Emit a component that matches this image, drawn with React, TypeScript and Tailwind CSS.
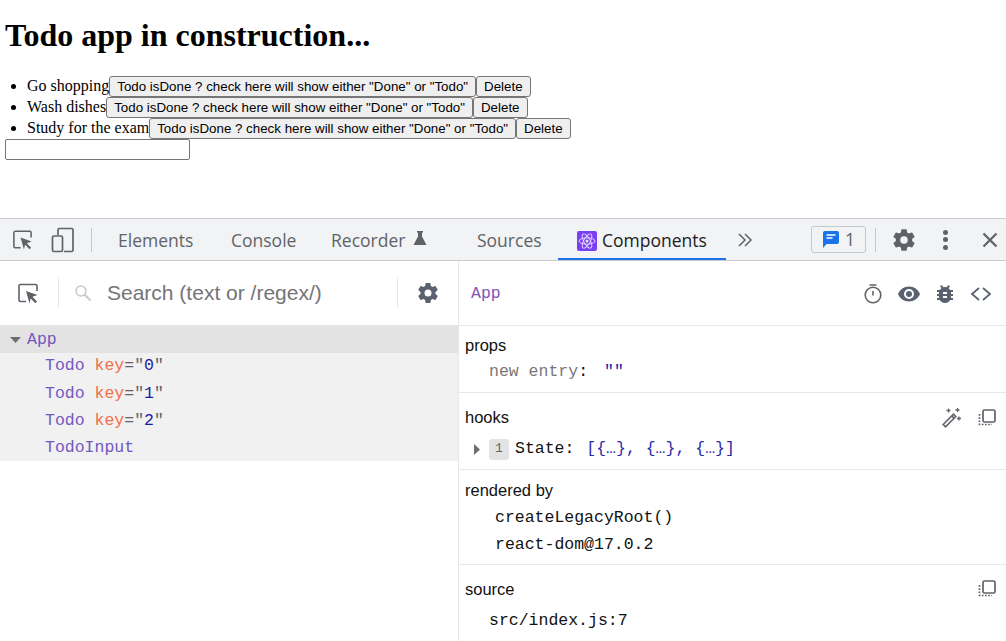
import * as React from "react";

const todos = ["Go shopping", "Wash dishes", "Study for the exam"];
const keys = ["0", "1", "2"];

const mono = "font-['Liberation_Mono',monospace]";
const sans = "font-['Liberation_Sans',sans-serif]";
const tabFont = "font-['Open_Sans',sans-serif]";

function PageButton(props: React.PropsWithChildren) {
  return (
    <button
      type="button"
      className={`${sans} box-border h-[21px] rounded-[3px] border border-[#767676] bg-[#efefef] px-[7px] align-top text-[13.33px] leading-[15px] text-black`}
    >
      {props.children}
    </button>
  );
}

function InspectIcon({ className }: { className?: string }) {
  return (
    <svg viewBox="0 0 24 24" className={className} fill="none">
      <path d="M10 20.5H4.500A1.500 1.500 0 0 1 3 19V5a1.500 1.500 0 0 1 1.500-1.500h15A1.500 1.500 0 0 1 21 5v5" stroke="#5f6368" strokeWidth="1.600" />
      <path d="M10 10l11.500 4-5 1.800 4.500 4.700-1.700 1.700-4.600-4.600-1.200 4.900z" fill="#5f6368" />
    </svg>
  );
}

function Gear({ className }: { className?: string }) {
  return (
    <svg viewBox="0 0 24 24" className={className} fill="currentColor">
      <path d="M19.430 12.980c.04-.32.070-.64.070-.98s-.03-.66-.07-.98l2.110-1.650a.5.500 0 0 0 .12-.64l-2-3.460a.5.500 0 0 0-.61-.22l-2.490 1a7.300 7.300 0 0 0-1.690-.98l-.38-2.650A.49.490 0 0 0 14 2h-4a.49.490 0 0 0-.49.420l-.38 2.650c-.61.25-1.170.59-1.690.98l-2.490-1a.49.490 0 0 0-.61.220l-2 3.460a.49.490 0 0 0 .12.640l2.110 1.650c-.04.32-.07.65-.07.980s.03.660.07.980l-2.110 1.650a.5.500 0 0 0-.12.640l2 3.460c.12.220.39.300.61.220l2.490-1c.52.400 1.080.730 1.690.980l.38 2.650c.03.240.24.420.49.420h4c.25 0 .46-.18.49-.42l.38-2.650c.61-.25 1.170-.59 1.690-.98l2.490 1c.23.090.49 0 .61-.22l2-3.460a.5.500 0 0 0-.12-.64zM12 15.500a3.500 3.500 0 1 1 0-7 3.500 3.500 0 0 1 0 7z" />
    </svg>
  );
}

function SuspendIcon() {
  return (
    <svg viewBox="0 0 20 20" className="size-[20px]" fill="none">
      <circle cx="10" cy="11" r="7.800" stroke="#5f6368" strokeWidth="1.600" fill="none" />
      <path d="M6.500 1h7M10 7v4.500" stroke="#5f6368" strokeWidth="1.600" />
    </svg>
  );
}

function CopyIcon() {
  return (
    <svg viewBox="0 0 18 18" className="size-[18px]" fill="none">
      <rect x="5" y="1" width="12" height="12" rx="1.500" stroke="#5f6368" strokeWidth="1.700" />
      <path d="M1.500 5v10.500H14" stroke="#5f6368" strokeWidth="1.700" strokeDasharray="1.700 1.500" />
    </svg>
  );
}

function WandIcon() {
  return (
    <svg viewBox="0 0 22 22" className="size-[22px]" fill="none">
      <path d="M2.200 17.500 12.500 7.200l2.300 2.300L4.500 19.800z" stroke="#5f6368" strokeWidth="1.600" />
      <path d="M10.800 8.900l2.300 2.300" stroke="#5f6368" strokeWidth="1.600" />
      <path d="M7.500 1.500v4M5.500 3.500h4M16.500 1v4M14.500 3h4M18 9.500v4M16 11.500h4" stroke="#5f6368" strokeWidth="1.300" />
    </svg>
  );
}

function ReactIcon() {
  return (
    <svg viewBox="0 0 20 20" className="size-[20px] rounded-[2px] bg-[#7a3ff2]">
      <g fill="none" stroke="#e8e0ff" strokeWidth="0.900">
        <ellipse cx="10" cy="10" rx="8" ry="3.200" />
        <ellipse cx="10" cy="10" rx="8" ry="3.200" transform="rotate(60 10 10)" />
        <ellipse cx="10" cy="10" rx="8" ry="3.200" transform="rotate(120 10 10)" />
      </g>
      <circle cx="10" cy="10" r="1.500" fill="#e8e0ff" />
    </svg>
  );
}

function Section(props: React.PropsWithChildren<{ className: string }>) {
  return (
    <div className={`border-b border-[#e8e8e8] pl-[6px] ${props.className}`}>
      {props.children}
    </div>
  );
}

function TreeRow(props: React.PropsWithChildren<{ className?: string }>) {
  return (
    <div className={`${mono} flex h-[27px] items-center pl-[45px] text-[16.5px] text-[#7358bd] ${props.className ?? ""}`}>
      {props.children}
    </div>
  );
}

export default function App() {
  return (
    <div className="h-[641px] w-[1006px] overflow-hidden bg-white">
      <div className="box-border h-[218px] pl-[5px] font-['Liberation_Serif',serif] text-[16px] text-black">
        <h1 className="pt-[17px] text-[32px] leading-[37px] font-bold">
          Todo app in construction...
        </h1>
        <ul className="mt-[22px] list-disc pl-[22px]">
          {todos.map((todo) => (
            <li key={todo} className="h-[21px] leading-[19px]">
              {todo}
              <PageButton>Todo isDone ? check here will show either "Done" or "Todo"</PageButton>
              <PageButton>Delete</PageButton>
            </li>
          ))}
        </ul>
        <input
          readOnly
          className="box-border block h-[21px] w-[185px] rounded-[2px] border border-[#767676] bg-white"
        />
      </div>

      <div className={`${tabFont} box-border flex h-[43px] items-center border-y border-[#cbcdd1] bg-[#f1f3f4] text-[17.5px] whitespace-nowrap text-[#5f6368]`}>
        <InspectIcon className="ml-[11px] size-[23px]" />
        <svg viewBox="0 0 24 26" className="ml-[17px] h-[26px] w-[24px]" fill="none">
          <path d="M7 8V3a1.500 1.500 0 0 1 1.500-1.500h12A1.500 1.500 0 0 1 22 3v20a1.500 1.500 0 0 1-1.500 1.500H13" stroke="#5f6368" strokeWidth="1.700" />
          <rect x="1.500" y="9" width="10" height="15.500" rx="1.500" stroke="#5f6368" strokeWidth="1.700" />
        </svg>
        <div className="ml-[16px] h-[24px] w-px bg-[#c4c7cc]" />
        <span className="ml-[26px] w-[77px] pt-[2px]">Elements</span>
        <span className="ml-[36px] w-[65px] pt-[2px]">Console</span>
        <span className="ml-[35px] w-[75px] pt-[2px]">Recorder</span>
        <svg viewBox="0 0 14 14" className="mb-[3px] ml-[7px] size-[14px]" fill="#5f6368">
          <path d="M4 0h6v1.500H9v4l4.500 8.500H.5L5 5.500v-4H4z" />
        </svg>
        <span className="ml-[50px] w-[63px] pt-[2px]">Sources</span>
        <div className="ml-[18px] box-border flex h-[41px] w-[168px] items-center gap-[5px] border-b-2 border-[#1a73e8] pt-[4px] pl-[19px] text-[#202124]">
          <ReactIcon />
          <span>Components</span>
        </div>
        <svg viewBox="0 0 16 14" className="ml-[11px] h-[14px] w-[16px]" fill="none" stroke="#5f6368" strokeWidth="1.500">
          <path d="M2 1l6 6-6 6M8 1l6 6-6 6" />
        </svg>
        <div className="ml-[58px] box-border flex h-[27px] w-[55px] items-center gap-[6px] rounded-[3px] border border-[#c4c7cc] pl-[11px]">
          <svg viewBox="0 0 16 17" className="h-[17px] w-[16px]">
            <path d="M2 0h12a2 2 0 0 1 2 2v9a2 2 0 0 1-2 2H3.500L0 17V2a2 2 0 0 1 2-2z" fill="#1a73e8" />
            <path d="M3.500 4h9M3.500 7h6" stroke="white" strokeWidth="1.300" />
          </svg>
          <span>1</span>
        </div>
        <div className="ml-[9px] h-[24px] w-px bg-[#c4c7cc]" />
        <Gear className="ml-[15px] size-[26px] text-[#5f6368]" />
        <div className="ml-[26px] flex h-[20px] w-[5px] flex-col justify-between">
          <div className="size-[5px] rounded-full bg-[#5f6368]" />
          <div className="size-[5px] rounded-full bg-[#5f6368]" />
          <div className="size-[5px] rounded-full bg-[#5f6368]" />
        </div>
        <svg viewBox="0 0 16 16" className="ml-[34px] size-[16px]" fill="none" stroke="#5f6368" strokeWidth="2.200">
          <path d="M1.500 1.500l13 13M14.500 1.500l-13 13" />
        </svg>
      </div>

      <div className="flex h-[380px]">
        <div className="box-border w-[459px] border-r border-[#e8e8e8]">
          <div className="flex h-[64px] items-center">
            <InspectIcon className="ml-[16px] size-[24px]" />
            <div className="ml-[18px] h-[30px] w-px bg-[#e8e8e8]" />
            <svg viewBox="0 0 18 18" className="ml-[15px] size-[18px]" fill="none" stroke="#c9c9c9" strokeWidth="1.500">
              <circle cx="7" cy="7" r="5" />
              <path d="M10.500 10.500l6 6" strokeWidth="2" />
            </svg>
            <span className={`${sans} ml-[15px] w-[290px] text-[21px] text-[#757575]`}>
              Search (text or /regex/)
            </span>
            <div className="h-[30px] w-px bg-[#e8e8e8]" />
            <Gear className="ml-[18px] size-[24px] text-[#5a6270]" />
          </div>
          <div className={`${mono} flex h-[28px] items-center bg-[#e3e3e3] pt-[2px] pl-[10px] text-[16.5px] text-[#7358bd]`}>
            <svg viewBox="0 0 11 6" className="mr-[6px] h-[6px] w-[11px]" fill="#6e6e6e">
              <path d="M0 0h11L5.500 6z" />
            </svg>
            App
          </div>
          <div className="bg-[#f1f1f1]">
            {keys.map((k) => (
              <TreeRow key={k} className={k === "0" ? "" : "pt-[2px]"}>
                Todo&nbsp;
                <span className="text-[#f0704a]">key</span>
                <span className="text-[#5f6368]">="</span>
                <span className="text-[#1a1aa6]">{k}</span>
                <span className="text-[#5f6368]">"</span>
              </TreeRow>
            ))}
            <TreeRow className="pt-[2px]">TodoInput</TreeRow>
          </div>
        </div>

        <div className={`${sans} min-w-0 flex-1 text-[16.5px] text-[#111]`}>
          <div className="box-border flex h-[65px] items-center border-b border-[#e8e8e8] pt-[2px] pl-[12px]">
            <span className={`${mono} text-[#7f55b8]`}>App</span>
            <div className="ml-auto flex items-center pr-[13px]">
              <SuspendIcon />
              <svg viewBox="0 0 24 24" className="ml-[14px] size-[24px]" fill="#5a6270">
                <path d="M12 4.500C7 4.500 2.700 7.600 1 12c1.700 4.400 6 7.500 11 7.500s9.300-3.100 11-7.500c-1.700-4.400-6-7.500-11-7.500zM12 17a5 5 0 1 1 0-10 5 5 0 0 1 0 10zm0-8a3 3 0 1 0 0 6 3 3 0 0 0 0-6z" />
              </svg>
              <svg viewBox="0 0 24 24" className="ml-[12px] size-[24px]" fill="#5a6270">
                <path d="M20 8h-2.800a6 6 0 0 0-1.800-2l1.600-1.600L15.600 3l-2.200 2.200a6 6 0 0 0-2.800 0L8.400 3 7 4.400 8.600 6a6 6 0 0 0-1.800 2H4v2h2.100a6 6 0 0 0-.1 1v1H4v2h2v1c0 .3 0 .7.100 1H4v2h2.800a6 6 0 0 0 10.400 0H20v-2h-2.100c.1-.3.100-.7.100-1v-1h2v-2h-2v-1c0-.3 0-.7-.1-1H20zm-6 8h-4v-2h4zm0-4h-4v-2h4z" />
              </svg>
              <svg viewBox="0 0 24 24" className="ml-[12px] size-[24px]" fill="none" stroke="#5a6270" strokeWidth="1.800">
                <path d="M10 6l-7 6 7 6M14 6l7 6-7 6" />
              </svg>
            </div>
          </div>

          <Section className="h-[67px]">
            <div className="pt-[9px] leading-[20px]">props</div>
            <div className={`${mono} mt-[7px] pl-[24px] leading-[20px]`}>
              <span className="text-[#777]">new entry</span>
              <span>:</span>
              <span className="ml-[16px] text-[#1a1aa6]">""</span>
            </div>
          </Section>

          <Section className="h-[77px]">
            <div className="flex h-[50px] items-center pb-[1px]">
              <span>hooks</span>
              <div className="ml-auto flex items-center gap-[15px] pr-[10px]">
                <WandIcon />
                <CopyIcon />
              </div>
            </div>
            <div className={`${mono} -mt-[6px] flex h-[24px] items-center`}>
              <svg viewBox="0 0 6 11" className="ml-[9px] h-[11px] w-[6px]" fill="#6e6e6e">
                <path d="M0 0l6 5.500L0 11z" />
              </svg>
              <span className="ml-[9px] flex h-[21px] w-[20px] items-center justify-center rounded-[3px] bg-[#e3e3e3] text-[13px] text-[#666]">
                1
              </span>
              <span className="ml-[6px]">State:&nbsp;</span>
              <span className="ml-[2px] text-[#2a2aa8]">{"[{…}, {…}, {…}]"}</span>
            </div>
          </Section>

          <Section className="h-[95px]">
            <div className="pt-[10px] leading-[20px]">rendered by</div>
            <div className={`${mono} mt-[4px] pl-[30px] leading-[27px]`}>createLegacyRoot()</div>
            <div className={`${mono} pl-[30px] leading-[27px]`}>react-dom@17.0.2</div>
          </Section>

          <div className="pl-[6px]">
            <div className="flex h-[48px] items-center">
              <span>source</span>
              <div className="ml-auto pr-[10px]">
                <CopyIcon />
              </div>
            </div>
            <div className={`${mono} -mt-[2px] pl-[24px] leading-[20px]`}>src/index.js:7</div>
          </div>
        </div>
      </div>
    </div>
  );
}
